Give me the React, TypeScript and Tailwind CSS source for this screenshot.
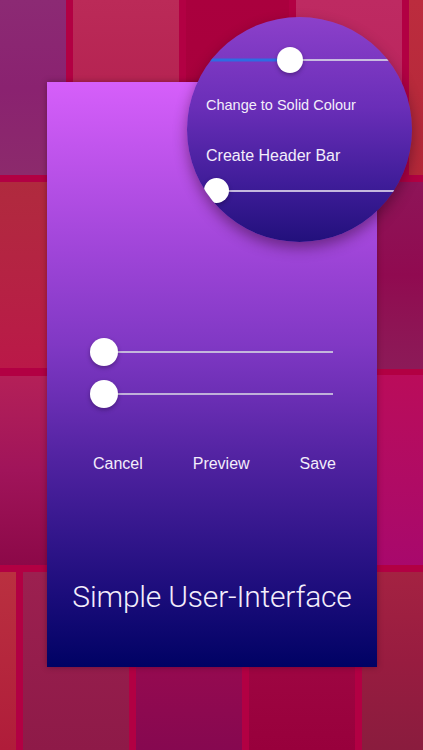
import React from "react";

// background tile: soft vertical gradient per tile
const Tile = ({ className }: { className: string }) => (
  <div className={`shrink-0 ${className}`} />
);

const Slider = ({
  thumb,
  size,
  track,
  fill,
  className,
}: {
  thumb: number;
  size: string;
  track: string;
  fill?: string;
  className: string;
}) => (
  <div className={`relative shrink-0 ${className}`}>
    {fill && <div className={`absolute left-0 top-1/2 -translate-y-1/2 ${fill}`} />}
    <div className={`absolute right-0 top-1/2 -translate-y-1/2 ${track}`} />
    <div
      className={`absolute top-0 rounded-full bg-white shadow-[0_2px_4px_rgba(20,0,40,0.35)] ${size}`}
      style={{ left: thumb }}
    />
  </div>
);

export default function App() {
  return (
    <div
      className="relative w-[423px] h-[750px] overflow-hidden bg-[#b20043] flex flex-col"
      style={{ fontFamily: '"Liberation Sans", Arial, sans-serif' }}
    >
      {/* top row of tiles */}
      <div className="flex gap-[7px] h-[175px] shrink-0">
        <Tile className="w-[66px] bg-gradient-to-b from-[#8c2a74] via-[#8a2270] to-[#8c2a6c]" />
        <Tile className="w-[106px] bg-gradient-to-b from-[#bb2a58] to-[#b01c4c]" />
        <Tile className="w-[103px] bg-gradient-to-b from-[#aa003e] to-[#a6003a]" />
        <Tile className="w-[106px] bg-gradient-to-b from-[#be2a62] to-[#b8225a]" />
        <Tile className="flex-1 bg-gradient-to-b from-[#bc2c3e] to-[#b42838]" />
      </div>

      {/* middle rows */}
      <div className="flex gap-[7px] h-[383px] mt-[7px] shrink-0">
        <div className="w-[200px] flex flex-col gap-[8px]">
          <Tile className="h-[186px] bg-gradient-to-b from-[#b02a3e] to-[#ba1848]" />
          <Tile className="flex-1 bg-gradient-to-b from-[#b42058] via-[#a0145a] to-[#8c0848]" />
        </div>
        <div className="flex-1 flex flex-col gap-[6px]">
          <Tile className="h-[187px] bg-gradient-to-b from-[#8e1458] via-[#900a50] to-[#8c1a58]" />
          <Tile className="flex-1 bg-gradient-to-b from-[#ba0c5a] to-[#a8086c]" />
        </div>
      </div>

      {/* bottom row of tiles */}
      <div className="flex gap-[7px] flex-1 mt-[7px]">
        <Tile className="w-[16px] bg-gradient-to-b from-[#ba3040] to-[#b01c3a]" />
        <Tile className="w-[106px] bg-gradient-to-b from-[#9c2050] to-[#8e1a48]" />
        <Tile className="w-[106px] bg-gradient-to-b from-[#a00c52] via-[#960a50] to-[#860850]" />
        <Tile className="w-[106px] bg-gradient-to-b from-[#a40c48] to-[#98003c]" />
        <Tile className="flex-1 bg-gradient-to-b from-[#a42242] via-[#981c40] to-[#8a1c3e]" />
      </div>

      {/* phone screen card */}
      <div className="absolute left-[47px] top-[82px] w-[330px] h-[585px] flex flex-col bg-[linear-gradient(180deg,#d65ffa_0%,#9f45d8_29%,#8038c4_45%,#5022a0_65%,#1a0c7a_88%,#000264_100%)] shadow-[0_0_6px_rgba(40,0,30,0.4)] text-[#f3edfb]">
        <Slider
          thumb={0}
          size="w-[28px] h-[28px]"
          track="left-[14px] h-[2px] bg-[#c4b6dc]"
          className="ml-[43px] w-[243px] h-[28px] mt-[256px]"
        />
        <Slider
          thumb={0}
          size="w-[28px] h-[28px]"
          track="left-[14px] h-[2px] bg-[#c0b0da]"
          className="ml-[43px] w-[243px] h-[28px] mt-[13.5px]"
        />
        <div className="flex justify-between pl-[46px] pr-[41px] mt-[46.5px] text-[16px] leading-[20px]">
          <span>Cancel</span>
          <span>Preview</span>
          <span>Save</span>
        </div>
        <div
          className="mt-[105px] text-center text-[30px] leading-[36px] font-light tracking-[-0.2px]"
          style={{ fontFamily: 'Roboto, "Liberation Sans", sans-serif' }}
        >
          Simple User-Interface
        </div>
      </div>

      {/* magnifier */}
      <div className="absolute left-[187px] top-[17px] w-[225px] h-[225px] rounded-full overflow-hidden flex flex-col bg-[linear-gradient(180deg,#8c40ca_0%,#6a2eb8_40%,#3e1c98_75%,#22107c_100%)] shadow-[0_6px_14px_rgba(40,0,30,0.45)] text-[#f3edfb]">
        <Slider
          thumb={90}
          size="w-[26px] h-[26px]"
          fill="w-[92px] h-[3px] bg-[#2f6ce2]"
          track="left-[110px] h-[2px] bg-[#c8bce0]"
          className="w-[225px] h-[26px] mt-[30px]"
        />
        <div className="ml-[19px] mt-[23px] text-[14.5px] leading-[18px] whitespace-nowrap">
          Change to Solid Colour
        </div>
        <div className="ml-[19px] mt-[32px] text-[16px] leading-[20px] whitespace-nowrap">
          Create Header Bar
        </div>
        <Slider
          thumb={17}
          size="w-[25px] h-[25px]"
          track="left-[30px] h-[2px] bg-[#c4b8de]"
          className="w-[225px] h-[25px] mt-[12px]"
        />
      </div>
    </div>
  );
}
